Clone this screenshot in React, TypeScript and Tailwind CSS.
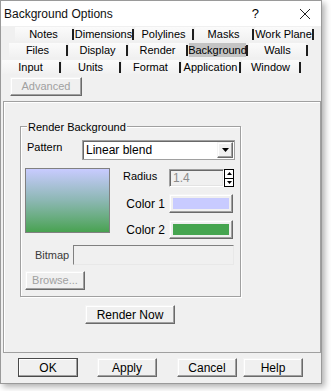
import React from 'react'

const raised =
  'border border-t-[#f4f4f4] border-l-[#f4f4f4] border-r-[#6a6a6a] border-b-[#6a6a6a] shadow-[inset_-1px_-1px_#a0a0a0,inset_1px_1px_#ffffff] bg-[#f0f0f0]'
const sunken =
  'border border-t-[#a0a0a0] border-l-[#a0a0a0] border-r-[#ffffff] border-b-[#ffffff] shadow-[inset_1px_1px_#696969,inset_-1px_-1px_#e3e3e3]'

const rows: { offset: string; tabs: string[] }[] = [
  { offset: 'pl-[14px]', tabs: ['Notes', 'Dimensions', 'Polylines', 'Masks', 'Work Plane'] },
  { offset: 'pl-[8px]', tabs: ['Files', 'Display', 'Render', 'Background', 'Walls'] },
  { offset: 'pl-[1px]', tabs: ['Input', 'Units', 'Format', 'Application', 'Window'] },
]

function Tab({ label }: { label: string }) {
  const active = label === 'Background'
  return (
    <div className="flex h-[14px] w-[60px] items-center">
      <div
        className={`flex h-[14px] w-[57px] items-center justify-center whitespace-nowrap ${
          active ? 'bg-[#c4c4c4]' : 'bg-gradient-to-b from-[#fbfbfb] to-[#f1f1f1]'
        }`}
      >
        {label}
      </div>
      <div className="h-[11px] w-[2px] bg-[#1e1e1e]" />
    </div>
  )
}

function Button({
  label,
  className = '',
  disabled = false,
}: {
  label: string
  className?: string
  disabled?: boolean
}) {
  return (
    <div
      className={`flex h-[19px] items-center justify-center ${raised} ${
        disabled ? 'text-[#a0a0a0]' : 'text-black'
      } ${className}`}
    >
      {label}
    </div>
  )
}

export default function App() {
  return (
    <div className="h-[391px] w-[331px] overflow-hidden bg-white" style={{ fontFamily: '"Liberation Sans", Arial, sans-serif' }}>
      <div className="flex h-[384px] w-[322px] flex-col border border-[#9a9a9a] bg-[#f0f0f0] text-[11px] text-black shadow-[3px_3px_6px_rgba(0,0,0,0.3)]">
        {/* Title bar */}
        <div className="flex h-[25px] shrink-0 items-center bg-white pl-[3px]">
          <span className="text-[12px] text-[#101010]">Background Options</span>
          <span className="ml-auto mr-[40px] text-[13px]">?</span>
          <svg width="12" height="12" viewBox="0 0 12 12" className="mr-[10px]">
            <path d="M1 1 L11 11 M11 1 L1 11" stroke="#222" strokeWidth="1" />
          </svg>
        </div>

        {/* Tabs */}
        <div className="mt-[1px] flex flex-col gap-[2px]">
          {rows.map((r, i) => (
            <div key={i} className={`flex ${r.offset} ${i === 2 ? 'mt-[1px]' : ''}`}>
              {r.tabs.map((t) => (
                <Tab key={t} label={t} />
              ))}
            </div>
          ))}
        </div>

        <div className="pl-[9px] pt-[3px]">
          <Button label="Advanced" disabled className="w-[72px]" />
        </div>

        {/* Tab page */}
        <div className="ml-[2px] mt-[5px] flex h-[252px] w-[318px] flex-col border border-[#a0a0a0] shadow-[inset_1px_1px_#ffffff]">
          {/* Group box */}
          <div className="relative ml-[16px] mt-[24px] h-[171px] w-[221px] border border-[#a0a0a0] shadow-[inset_1px_1px_#ffffff,1px_1px_#ffffff]">
            <span className="absolute left-[6px] top-[-8px] bg-[#f0f0f0] px-[1px] text-[11px]">Render Background</span>

            <div className="flex items-center pl-[6px] pt-[13px]">
              <span className="w-[55px] -translate-y-[3px]">Pattern</span>
              <div className="flex h-[20px] w-[153px] items-center border border-[#a0a0a0] bg-white pl-[3px] shadow-[inset_1px_1px_#696969]">
                <span className="text-[12px]">Linear blend</span>
                <div className={`ml-auto mr-[1px] flex h-[16px] w-[16px] items-center justify-center ${raised}`}>
                  <svg width="7" height="4" viewBox="0 0 7 4">
                    <path d="M0 0 H7 L3.5 4 Z" fill="#000" />
                  </svg>
                </div>
              </div>
            </div>

            <div className="flex pl-[4px] pt-[8px]">
              <div className="h-[65px] w-[85px] border border-[#808080] bg-gradient-to-b from-[#c8cbff] via-[#8cb7b3] to-[#48a250]" />
              <div className="ml-[13px] flex flex-col">
                <div className="flex h-[20px] items-center">
                  <span className="w-[46px] -translate-y-[2px]">Radius</span>
                  <div className={`flex h-[18px] w-[55px] items-center pl-[3px] text-[12px] text-[#8c8c8c] ${sunken}`}>1.4</div>
                  <div className="flex h-[18px] w-[10px] flex-col border border-black bg-white">
                    <div className="flex flex-1 items-center justify-center border-b border-black">
                      <svg width="5" height="3" viewBox="0 0 5 3"><path d="M2.5 0 L5 3 H0 Z" fill="#000" /></svg>
                    </div>
                    <div className="flex flex-1 items-center justify-center">
                      <svg width="5" height="3" viewBox="0 0 5 3"><path d="M0 0 H5 L2.5 3 Z" fill="#000" /></svg>
                    </div>
                  </div>
                </div>
                <div className="mt-[6px] flex h-[19px] items-center">
                  <span className="w-[46px] pr-[4px] text-right text-[12px]">Color 1</span>
                  <div className={`flex h-[19px] w-[64px] items-center justify-center ${raised}`}>
                    <div className="h-[11px] w-[56px] bg-[#c8cbff]" />
                  </div>
                </div>
                <div className="mt-[7px] flex h-[19px] items-center">
                  <span className="w-[46px] pr-[4px] text-right text-[12px]">Color 2</span>
                  <div className={`flex h-[19px] w-[64px] items-center justify-center ${raised}`}>
                    <div className="h-[11px] w-[56px] bg-[#46a550]" />
                  </div>
                </div>
              </div>
            </div>

            <div className="flex items-center pl-[14px] pt-[6px]">
              <span className="w-[38px] text-[#3a3a3a]">Bitmap</span>
              <div className="h-[20px] w-[161px] border border-t-[#808080] border-l-[#808080] border-r-[#e8e8e8] border-b-[#e8e8e8] bg-[#f0f0f0]" />
            </div>

            <div className="pl-[4px] pt-[6px]">
              <Button label="Browse..." disabled className="w-[60px]" />
            </div>
          </div>

          <div className="pl-[81px] pt-[8px]">
            <Button label="Render Now" className="w-[90px] text-[12px]" />
          </div>
        </div>

        {/* Dialog buttons */}
        <div className="flex pl-[17px] pt-[5px] text-[12px]">
          <Button label="OK" className="w-[60px] !border-[#4a4a4a]" />
          <Button label="Apply" className="ml-[19px] w-[60px]" />
          <Button label="Cancel" className="ml-[20px] w-[60px]" />
          <Button label="Help" className="ml-[6px] w-[60px]" />
        </div>
      </div>
    </div>
  )
}
